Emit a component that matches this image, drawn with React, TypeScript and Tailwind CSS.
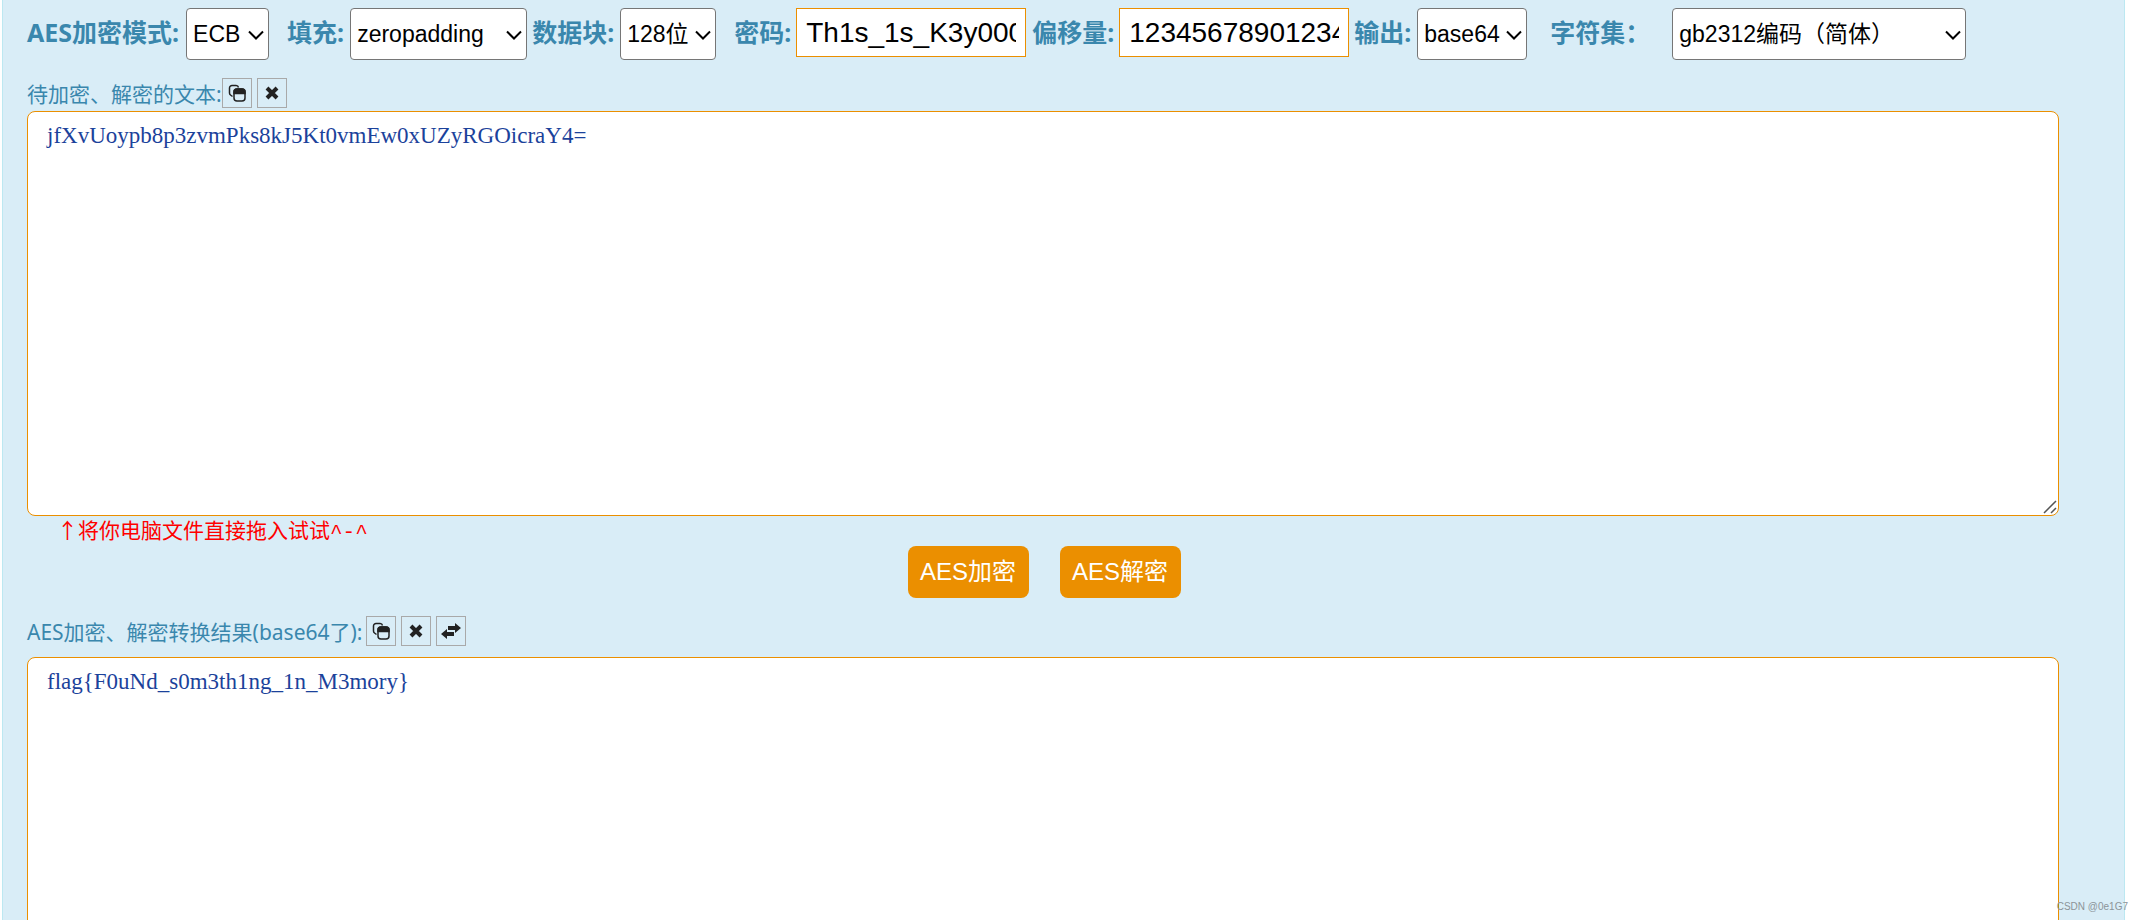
import { useState } from 'react'
import type { ReactNode } from 'react'

const MODES = ['ECB', 'CBC', 'CTR', 'OFB', 'CFB']
const PADDINGS = ['zeropadding', 'pkcs5padding', 'pkcs7padding', 'iso10126', 'ansix923', 'nopadding']
const BLOCKS = ['128位', '192位', '256位']
const OUTPUTS = ['base64', 'hex']
const CHARSETS = ['gb2312编码（简体）', 'gbk编码', 'utf-8编码']

function Field({ id, label, className = '', children }: { id: string; label: string; className?: string; children: ReactNode }) {
  return (
    <div className={`flex shrink-0 items-start ${className}`}>
      <label htmlFor={id} className="whitespace-nowrap text-[25px] font-bold leading-[49px]">
        {label}
      </label>
      {children}
    </div>
  )
}

function Select({ id, options, className }: { id: string; options: string[]; className: string }) {
  return (
    <div className={`relative h-[52px] ${className}`}>
      <select
        id={id}
        className="h-full w-full appearance-none rounded-sm border border-[#767676] bg-white pl-[6px] text-[23px] text-black font-['Liberation_Sans','Noto_Sans_CJK_SC',sans-serif]"
      >
        {options.map((o) => (
          <option key={o}>{o}</option>
        ))}
      </select>
      <svg viewBox="0 0 16 10" className="pointer-events-none absolute right-[5px] top-[22px] h-[10px] w-4" fill="none" stroke="#000" strokeWidth="2">
        <path d="M1 1.5l7 7 7-7" />
      </svg>
    </div>
  )
}

function TextField({ id, value, className }: { id: string; value: string; className: string }) {
  const [text, setText] = useState(value)
  return (
    <input
      id={id}
      type="text"
      value={text}
      onChange={(e) => setText(e.target.value)}
      className={`h-[49px] border border-[#eb8f00] bg-white px-[9px] text-[28px] text-black outline-none font-['Liberation_Sans',sans-serif] ${className}`}
    />
  )
}

function TextArea({ id, value, onChange }: { id: string; value: string; onChange: (v: string) => void }) {
  return (
    <div className="relative">
      <textarea
        id={id}
        spellCheck={false}
        value={value}
        onChange={(e) => onChange(e.target.value)}
        className="block h-[405px] w-full resize-none rounded-lg border border-[#eb8f00] bg-white px-[19px] py-2 text-[23px] leading-8 text-[#1b429b] outline-none font-['Liberation_Serif','Noto_Sans_CJK_SC',serif]"
      />
      <svg viewBox="0 0 14 14" className="pointer-events-none absolute bottom-[2px] right-[2px] size-[14px]" fill="none" stroke="#555" strokeWidth="1.500">
        <path d="M1 13L13 1M8 13l5-5" />
      </svg>
    </div>
  )
}

function IconButton({ title, onClick, children }: { title: string; onClick?: () => void; children: ReactNode }) {
  return (
    <button
      type="button"
      title={title}
      aria-label={title}
      onClick={onClick}
      className="flex size-[30px] items-center justify-center border border-[#a9a9a9] text-[#222]"
    >
      {children}
    </button>
  )
}

function CopyIcon() {
  return (
    <svg viewBox="0 0 18 18" className="size-[18px]" fill="none" stroke="currentColor" strokeWidth="1.5">
      <path d="M4.5 12.500L2.500 11A2.500 2.500 0 0 1 1.500 9V4A2.500 2.500 0 0 1 4 1.500H8A2.500 2.500 0 0 1 10.500 3.500" />
      <rect x="6" y="5" width="11" height="12" rx="3" />
      <path d="M6 9.500V8A3 3 0 0 1 9 5H14A3 3 0 0 1 17 8V9.500Z" fill="currentColor" />
    </svg>
  )
}

function ClearIcon() {
  return (
    <svg viewBox="0 0 14 14" className="size-[14px]" stroke="currentColor" strokeWidth="4">
      <path d="M2 2l10 10M12 2L2 12" />
    </svg>
  )
}

function SwapIcon() {
  return (
    <svg viewBox="0 0 20 18" className="h-[18px] w-5" fill="currentColor">
      <path d="M7 4h7V1l6 5-6 5V8H7z" />
      <path d="M13 10v4H6v3L0 12l6-5v3z" />
    </svg>
  )
}

export default function App() {
  const [source, setSource] = useState('jfXvUoypb8p3zvmPks8kJ5Kt0vmEw0xUZyRGOicraY4=')
  const [result, setResult] = useState('flag{F0uNd_s0m3th1ng_1n_M3mory}')

  const swap = () => {
    setSource(result)
    setResult(source)
  }

  return (
    <div className="relative h-screen overflow-hidden bg-white pl-[2px] pr-[18px]">
      <main className="min-h-full border-x border-[#bce8f1] bg-[#d9edf7] pl-6 pr-[65px] pt-2 text-[#3a87ad] font-['Noto_Sans','Noto_Sans_CJK_SC',sans-serif]">
        <div className="flex h-[70px] items-start">
          <Field id="mode" label="AES加密模式:">
            <Select id="mode" options={MODES} className="ml-[7px] w-[83px]" />
          </Field>
          <Field id="padding" label="填充:" className="ml-[18px]">
            <Select id="padding" options={PADDINGS} className="ml-[6px] w-[177px]" />
          </Field>
          <Field id="block" label="数据块:" className="ml-[5px]">
            <Select id="block" options={BLOCKS} className="ml-[6px] w-[96px]" />
          </Field>
          <Field id="password" label="密码:" className="ml-[18px]">
            <TextField id="password" value="Th1s_1s_K3y000" className="ml-[5px] w-[230px]" />
          </Field>
          <Field id="iv" label="偏移量:" className="ml-[6px]">
            <TextField id="iv" value="1234567890123456" className="ml-[5px] w-[230px]" />
          </Field>
          <Field id="output" label="输出:" className="ml-[5px]">
            <Select id="output" options={OUTPUTS} className="ml-[6px] w-[110px]" />
          </Field>
          <Field id="charset" label="字符集：" className="ml-[23px]">
            <Select id="charset" options={CHARSETS} className="ml-[22px] w-[294px]" />
          </Field>
        </div>

        <div className="flex h-[33px] items-start">
          <label htmlFor="source" className="text-[21px] leading-8">
            待加密、解密的文本:
          </label>
          <div className="flex gap-[5px]">
            <IconButton title="复制"><CopyIcon /></IconButton>
            <IconButton title="清空" onClick={() => setSource('')}><ClearIcon /></IconButton>
          </div>
        </div>
        <TextArea id="source" value={source} onChange={setSource} />
        <p className="h-[30px] pl-[30px] text-[21px] leading-7 text-[#ff0000]">
          ↑将你电脑文件直接拖入试试<span className="font-['Liberation_Mono',monospace]">^-^</span>
        </p>

        <div className="flex justify-center gap-[31px] pl-[2px] font-['Liberation_Sans','Noto_Sans_CJK_SC',sans-serif]">
          <button type="button" className="h-[52px] min-w-[121px] rounded-lg bg-[#eb8f00] text-[24px] text-white">AES加密</button>
          <button type="button" className="h-[52px] min-w-[121px] rounded-lg bg-[#eb8f00] text-[24px] text-white">AES解密</button>
        </div>

        <div className="mt-[18px] flex h-[41px] items-start">
          <label htmlFor="result" className="text-[21px] leading-8">
            AES加密、解密转换结果(base64了):
          </label>
          <div className="ml-1 flex gap-[5px]">
            <IconButton title="复制"><CopyIcon /></IconButton>
            <IconButton title="清空" onClick={() => setResult('')}><ClearIcon /></IconButton>
            <IconButton title="互换" onClick={swap}><SwapIcon /></IconButton>
          </div>
        </div>
        <TextArea id="result" value={result} onChange={setResult} />
      </main>
      <span className="absolute bottom-[5px] right-[15px] text-[10px] leading-4 text-[#8c9499] font-['Liberation_Sans',sans-serif]">CSDN @0e1G7</span>
    </div>
  )
}
